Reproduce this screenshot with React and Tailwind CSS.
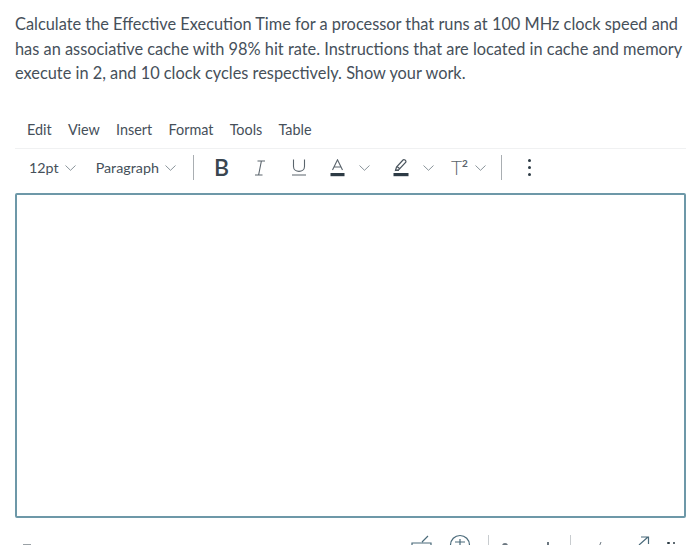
const Chev = ({ className = "" }) => (
  <svg width="11" height="6" viewBox="0 0 11 6" className={className} fill="none" stroke="#7d8890" strokeWidth="0.9">
    <path d="M0.5 0.5 L5.5 5.3 L10.5 0.5" />
  </svg>
);

export default function App() {
  return (
    <div className="w-[700px] h-[545px] overflow-hidden bg-white text-[#2d3b45] font-['Lato','Liberation_Sans',sans-serif]">
      <p className="pl-[15px] pr-[10px] pt-[12px] text-[16.35px] leading-[24.5px] text-[#46505a]">
        Calculate the Effective Execution Time for a processor that runs at 100 MHz clock speed and has an associative cache with 98% hit rate. Instructions that are located in cache and memory execute in 2, and 10 clock cycles respectively. Show your work.
      </p>

      <div className="mt-[34px] ml-[15px] w-[671px]">
        <div className="flex h-[20px] items-center gap-[16.2px] pl-[12px] text-[14.4px] text-[#46505a]">
          <span>Edit</span>
          <span>View</span>
          <span>Insert</span>
          <span>Format</span>
          <span>Tools</span>
          <span>Table</span>
        </div>

        <div className="mt-[8px] flex h-[37px] items-center border-t border-[#f0f1f2] pl-[14px] pt-[2px] text-[14.3px] text-[#46505a]">
          <span>12pt</span>
          <Chev className="ml-[6px]" />
          <span className="ml-[20px]">Paragraph</span>
          <Chev className="ml-[6px]" />
          <div className="ml-[17px] h-[25px] w-px bg-[#a9aeb2]" />
          <span className="ml-[20px] w-[15px] text-[23px] font-semibold leading-none text-[#3a4650]">B</span>
          <svg width="12" height="16" viewBox="0 0 12 16" className="ml-[25px]" fill="none" stroke="#5a646c" strokeWidth="1.1">
            <path d="M3.5 1 H11 M1 15 H8.5 M7.4 1 L4.6 15" />
          </svg>
          <svg width="14" height="17" viewBox="0 0 14 17" className="ml-[26px]" fill="none" stroke="#5a646c" strokeWidth="1.1">
            <path d="M1.5 0.5 V7.5 C1.5 14 12.5 14 12.5 7.5 V0.5 M0 16 H14" />
          </svg>
          <svg width="15" height="18" viewBox="0 0 15 18" className="ml-[24px]" fill="none">
            <path d="M2.5 11 L7.5 0.8 L12.5 11 M4 8 H11" stroke="#5a646c" strokeWidth="1.1" />
            <rect x="0.5" y="14" width="14" height="3.2" fill="#2d3b45" />
          </svg>
          <Chev className="ml-[14px]" />
          <svg width="16" height="18" viewBox="0 0 16 18" className="ml-[23px]" fill="none">
            <path d="M2.5 11.5 L3.5 8 L10 1 C11 0 13.5 1.5 12.8 3.2 L6 10.5 Z M3.2 11.5 H6 M4 7.5 L7 10" stroke="#4a555e" strokeWidth="1.2" />
            <rect x="0.5" y="14" width="15" height="3.2" fill="#2d3b45" />
          </svg>
          <Chev className="ml-[14px]" />
          <span className="ml-[17px] flex w-[18px] items-start leading-none text-[#5a646c]">
            <span className="text-[19px] font-light">T</span>
            <span className="text-[10px] font-bold">2</span>
          </span>
          <Chev className="ml-[6px]" />
          <div className="ml-[15px] h-[25px] w-px bg-[#a9aeb2]" />
          <div className="ml-[26px] flex flex-col gap-[3.5px]">
            <span className="size-[3.5px] rounded-full bg-[#2d3b45]" />
            <span className="size-[3.5px] rounded-full bg-[#2d3b45]" />
            <span className="size-[3.5px] rounded-full bg-[#2d3b45]" />
          </div>
        </div>

        <div className="mt-[8px] h-[325px] rounded-[2px] border-2 border-[#6d98a8] bg-white" />

        <div className="relative mt-[16px] flex h-[16px] items-start">
          <svg width="8" height="4" viewBox="0 0 8 4" className="absolute left-[8px] top-[9px]" fill="#9aa1a6">
            <rect x="0" y="1" width="8" height="3" />
          </svg>
          <svg width="22" height="12" viewBox="0 0 22 12" className="absolute left-[396px] top-[1px]" fill="none" stroke="#4a6a7a" strokeWidth="1.2">
            <path d="M1 12 V8 H20 V12 M11 7 L17 1" />
          </svg>
          <svg width="22" height="13" viewBox="0 0 22 13" className="absolute left-[434px] top-[0px]" fill="none" stroke="#4a6a7a" strokeWidth="1.2">
            <circle cx="11" cy="11" r="9.5" />
            <path d="M11 5 V12 M6 8 H16" />
          </svg>
          <div className="absolute left-[473px] top-[1px] h-[11px] w-px bg-[#c8cccf]" />
          <div className="absolute left-[487px] top-[9px] h-[3px] w-[6px] rounded-t-full bg-[#6b7780]" />
          <div className="absolute left-[532px] top-[8px] h-[4px] w-[2px] bg-[#6b7780]" />
          <div className="absolute left-[555px] top-[1px] h-[11px] w-px bg-[#c8cccf]" />
          <svg width="14" height="6" viewBox="0 0 14 6" className="absolute left-[578px] top-[8px]" fill="none" stroke="#6b7780" strokeWidth="1">
            <path d="M0 5 L3 4 M8 0 L6 5 M10 4 L13 5" />
          </svg>
          <svg width="12" height="10" viewBox="0 0 12 10" className="absolute left-[623px] top-[2px]" fill="none" stroke="#4a6a7a" strokeWidth="1.2">
            <path d="M1 9 L10 1 M3 1 H10.5 V8" />
          </svg>
          <div className="absolute left-[652px] top-[8px] flex gap-[3px]">
            <span className="size-[2.5px] rounded-full bg-[#2d3b45]" />
            <span className="size-[2.5px] rounded-full bg-[#2d3b45]" />
          </div>
        </div>
      </div>
    </div>
  );
}
